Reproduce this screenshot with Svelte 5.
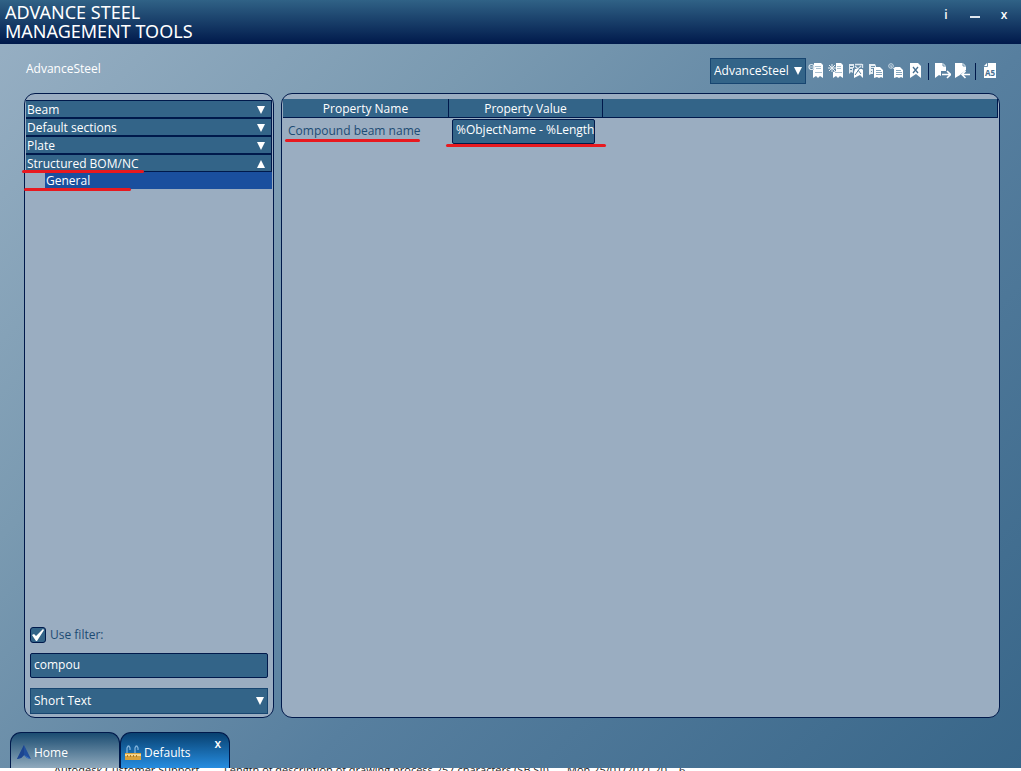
<script>
  let profile = $state('AdvanceSteel');
  let useFilter = $state(true);
  let filterText = $state('compou');
  let filterType = $state('Short Text');
  let compoundName = $state('%ObjectName - %Length');

  const profiles = ['AdvanceSteel'];
  const filterTypes = ['Short Text'];

  let groups = $state([
    { name: 'Beam', open: false, items: [] },
    { name: 'Default sections', open: false, items: [] },
    { name: 'Plate', open: false, items: [] },
    { name: 'Structured BOM/NC', open: true, items: ['General'] }
  ]);
</script>

<div class="app">
  <header>
    <h1>ADVANCE STEEL<br />MANAGEMENT TOOLS</h1>
    <div class="window-buttons">
      <button aria-label="Info">i</button>
      <button aria-label="Minimize"><span class="dash"></span></button>
      <button aria-label="Close">x</button>
    </div>
  </header>

  <div class="toolbar">
    <h2>AdvanceSteel</h2>
    <div class="tools">
      <div class="combo profile">
        <select aria-label="Profile" bind:value={profile}>
          {#each profiles as p}<option>{p}</option>{/each}
        </select>
        <svg class="arrow" width="8" height="8" viewBox="0 0 8 8"><path d="M0 0h8L4 8z" fill="#fff" /></svg>
      </div>
      <button class="tool" aria-label="Search defaults">
        <svg viewBox="0 0 16 16">
          <path d="M6 0h7l2 2v13l-3-2-2 2-2-2-3 2V7l1-1z" fill="#fff" />
          <path d="M7 3.500h6M8 5.500h5M7 9.500h7" stroke="#a9c0d0" />
          <circle cx="3.500" cy="4" r="2.500" fill="#557f9d" stroke="#dce6ee" stroke-width="1.200" />
          <path d="M2 4h4" stroke="#dce6ee" />
        </svg>
      </button>
      <button class="tool" aria-label="New default">
        <svg viewBox="0 0 16 16">
          <path d="M8 0h5l2 2v13l-3-2-2 2-2-2-3 2V9l3-1z" fill="#fff" />
          <path d="M9 3.500h4M9 5.500h4M7 9.500h7" stroke="#a9c0d0" />
          <path d="M0 5h8M4 1v8M1 2l6 6M7 2L1 8" stroke="#e7eef3" />
        </svg>
      </button>
      <button class="tool" aria-label="Rename default">
        <svg viewBox="0 0 16 16">
          <path d="M1 1h5v4H5v5l-2-1-2 2z" fill="#dce6ee" />
          <path d="M2 3.500h3M2 6.500h2" stroke="#557f9d" />
          <path d="M7 1.500h7M14.500 1v4M7 3l3 3 3-3" fill="none" stroke="#dce6ee" stroke-width="1.300" />
          <path d="M7 6h7l1 1v8l-3-3-2 1-4 2V9z" fill="#fff" />
          <path d="M12 5L7 12M10 7l3 4" fill="none" stroke="#557f9d" />
        </svg>
      </button>
      <button class="tool" aria-label="Copy default">
        <svg viewBox="0 0 16 16">
          <path d="M1 1h6l1 2v2H5v6H3l-2 1z" fill="#e7eef3" />
          <path d="M3 3.500h4M3 5.500h2M3 8.500h1" stroke="#6b91ad" />
          <path d="M7 4h5l3 3v8l-2-1-2 1-2-1-3 1V5z" fill="#fff" />
          <path d="M8 7.500h5M8 9.500h6M8 11.500h6" stroke="#86a6bd" />
        </svg>
      </button>
      <button class="tool" aria-label="Default history">
        <svg viewBox="0 0 16 16">
          <circle cx="3" cy="3" r="2.300" fill="none" stroke="#c8d8e3" />
          <path d="M3 2v2h1M5 5l2 2" fill="none" stroke="#c8d8e3" />
          <path d="M7 4h5l3 3v8l-2-1-2 1-2-1-3 1V5z" fill="#fff" />
          <path d="M8 7.500h5M8 9.500h6M8 11.500h6" stroke="#86a6bd" />
        </svg>
      </button>
      <button class="tool" aria-label="Delete default">
        <svg viewBox="0 0 16 16">
          <path d="M2 0h8l3 3v12l-5-4-6 4z" fill="#fff" />
          <path d="M5 4l5 6M10 4l-5 6" stroke="#466f91" stroke-width="1.300" />
        </svg>
      </button>
      <span class="divider"></span>
      <button class="tool" aria-label="Export">
        <svg viewBox="0 0 16 16">
          <path d="M0 0h8l3 3v5H6v5l-2-1-4 3z" fill="#fff" />
          <path d="M8 0v3h3" fill="none" stroke="#6b91ad" />
          <path d="M7 11.500h8M12 8l3.500 3.500L12 15" fill="none" stroke="#fff" stroke-width="1.600" />
        </svg>
      </button>
      <button class="tool" aria-label="Import">
        <svg viewBox="0 0 16 16">
          <path d="M0 0h8l3 3v4l-5 4-1 1-5 3z" fill="#fff" />
          <path d="M8 0v3h3" fill="none" stroke="#6b91ad" />
          <path d="M7 11.500h8M10.500 8L7 11.500l3.500 3.500" fill="none" stroke="#fff" stroke-width="1.600" />
        </svg>
      </button>
      <span class="divider"></span>
      <button class="tool last" aria-label="Advance Steel version">
        <svg viewBox="0 0 16 16">
          <path d="M5 0h9v15H2V3z" fill="#fff" />
          <path d="M2 3.500h3.500V0" fill="none" stroke="#6b91ad" />
          <text x="8" y="13" text-anchor="middle" font-size="8" font-weight="bold" fill="#466f91">A5</text>
        </svg>
      </button>
    </div>
  </div>

  <main>
    <aside class="panel">
      <nav>
        {#each groups as g}
          <button class="group" class:marked={g.open} onclick={() => (g.open = !g.open)}>
            <span>{g.name}</span>
            <svg width="8" height="8" viewBox="0 0 8 8"><path d={g.open ? 'M4 0l4 8H0z' : 'M0 0h8L4 8z'} fill="#fff" /></svg>
          </button>
          {#if g.open}
            {#each g.items as item}
              <a class="item" href="#general">{item}</a>
            {/each}
          {/if}
        {/each}
      </nav>
      <div class="filter">
        <label class="check">
          <input type="checkbox" bind:checked={useFilter} />
          <span class="box">
            {#if useFilter}
              <svg width="12" height="12" viewBox="0 0 12 12"><path d="M0 6l2-1 2 2 7-7 1 1-7 11H4z" fill="#fff" /></svg>
            {/if}
          </span>
          Use filter:
        </label>
        <input class="field" type="text" aria-label="Filter text" bind:value={filterText} />
        <div class="combo">
          <select aria-label="Filter type" bind:value={filterType}>
            {#each filterTypes as t}<option>{t}</option>{/each}
          </select>
          <svg class="arrow" width="8" height="8" viewBox="0 0 8 8"><path d="M0 0h8L4 8z" fill="#fff" /></svg>
        </div>
      </div>
    </aside>

    <section class="panel properties">
      <table>
        <thead>
          <tr>
            <th class="name">Property Name</th>
            <th class="value">Property Value</th>
            <th></th>
          </tr>
        </thead>
        <tbody>
          <tr>
            <td class="prop"><label for="compound">Compound beam name</label></td>
            <td class="val"><input id="compound" class="field" type="text" bind:value={compoundName} /></td>
            <td></td>
          </tr>
        </tbody>
      </table>
    </section>
  </main>

  <footer>
    <button class="tab">
      <svg width="14" height="16" viewBox="0 0 14 16">
        <path d="M7 0l7 14-4-1-3-3-3 3-4 1z" fill="#214f9c" />
        <path d="M7 0v10l-3 3-4 1z" fill="#1c4590" />
        <path d="M7 10l7 4-4-1z" fill="#3b75c4" />
      </svg>
      Home
    </button>
    <div class="tab active">
      <button class="tab-label">
        <svg width="16" height="16" viewBox="0 0 16 16">
          <path d="M2 8V3q1.500-4 3 0v2M10 8V3q1.500-4 3 0v2" fill="none" stroke="#7fb0d8" stroke-width="1.300" />
          <path d="M0 8h16v7H0z" fill="#d9a23c" />
          <path d="M0 9h16v2H0z" fill="#f5d58d" />
          <path d="M2.500 10v2M5.500 10v2M8.500 10v2M11.500 10v2" stroke="#a8782a" />
        </svg>
        Defaults
      </button>
      <button class="close" aria-label="Close Defaults">x</button>
    </div>
  </footer>
</div>
<div class="below">
  <span>Autodesk Customer Support</span>
  <span>Length of description of drawing process 257 characters (SB SII)</span>
  <span>Mon 25/01/2021 20...</span>
  <span>6</span>
</div>

<style>
  :global(body) {
    background: #fff;
    font-family: 'Open Sans', 'Noto Sans', sans-serif;
    font-size: 12px;
    line-height: 16px;
  }
  :global(#app) {
    display: flex;
    flex-direction: column;
    height: 100vh;
  }
  * { box-sizing: border-box; }
  h1, h2 { margin: 0; font-weight: 400; color: #fff; }
  button, input, select { font: inherit; color: #fff; }
  button { background: none; border: 0; padding: 0; cursor: pointer; }

  .app {
    flex: 1;
    min-height: 0;
    display: flex;
    flex-direction: column;
    background: linear-gradient(135deg, #98b0c4 0%, #7a9ab1 30%, #577f9f 60%, #386689 100%);
  }
  header {
    display: flex;
    justify-content: space-between;
    height: 44px;
    padding: 3px 12px 0 5px;
    background: linear-gradient(#306286, #00194b);
  }
  h1 {
    font-family: 'Noto Sans', 'Open Sans', sans-serif;
    font-size: 18px;
    line-height: 19px;
  }
  .window-buttons { display: flex; gap: 19px; height: 24px; }
  .window-buttons button { width: 10px; font-weight: 600; }
  .dash { display: block; height: 2px; margin-top: 4px; background: #dfe6ee; }

  .toolbar {
    display: flex;
    justify-content: space-between;
    padding: 14px 23px 9px 26px;
  }
  h2 { font-size: 12px; line-height: 22px; }
  .tools { display: flex; align-items: center; }
  .combo { position: relative; }
  .combo select {
    appearance: none;
    display: block;
    width: 100%;
    height: 26px;
    padding: 0 12px 1px 3px;
    border: 1px solid #174570;
    border-radius: 0;
    background: #336488;
  }
  .profile { width: 96px; margin-right: 2px; }
  .arrow { position: absolute; right: 4px; top: 9px; pointer-events: none; }
  .tool { width: 20px; height: 16px; }
  .tool svg { display: block; width: 16px; height: 16px; }
  .tool.last { width: 16px; }
  .divider { width: 1px; height: 17px; margin: 0 6px 0 0; background: #00194b; }

  main {
    flex: 1;
    min-height: 0;
    display: grid;
    grid-template-columns: 250px 1fr;
    gap: 7px;
    padding: 0 21px 0 24px;
  }
  .panel {
    border: 1px solid #00194b;
    border-radius: 11px;
    background: #9aadc1;
    padding: 6px 1px 3px;
  }
  aside {
    display: flex;
    flex-direction: column;
    justify-content: space-between;
  }
  .group {
    position: relative;
    display: flex;
    align-items: center;
    justify-content: space-between;
    width: 100%;
    height: 18px;
    padding: 2px 6px 0 1px;
    border: 1px solid #00194b;
    border-left-width: 0;
    background: #336488;
  }
  .item {
    position: relative;
    display: block;
    margin-left: 19px;
    padding-left: 1px;
    line-height: 17px;
    background: #1a4f9e;
    color: #fff;
    text-decoration: none;
  }
  /* red pen marks */
  .marked::after, .item::after, .prop::after, .val::after {
    content: '';
    position: absolute;
    height: 3px;
    border-radius: 2px;
    background: #e8191f;
  }
  .marked::after { left: -4px; bottom: -2px; width: 122px; z-index: 1; }
  .item::after { left: -21px; bottom: -2px; width: 107px; }
  .prop::after { left: 2px; right: 29px; bottom: 2px; }
  .val::after { left: -3px; right: -3px; bottom: -3px; }

  .filter { display: flex; flex-direction: column; gap: 10px; padding: 0 4px; }
  .check { display: flex; align-items: center; gap: 4px; color: #1d4b73; }
  .check input { position: absolute; opacity: 0; }
  .box {
    display: grid;
    place-items: center;
    width: 16px;
    height: 16px;
    border: 1px solid #00194b;
    border-radius: 3px;
    background: #336488;
  }
  .field {
    display: block;
    width: 100%;
    height: 25px;
    padding: 0 0 3px 3px;
    border: 1px solid #00194b;
    border-radius: 2px;
    background: #336488;
  }

  table { width: 100%; border-collapse: separate; border-spacing: 0; table-layout: fixed; }
  .properties { padding: 5px 1px; }
  th {
    height: 19px;
    padding: 2px 0 0;
    border-right: 1px solid #00194b;
    border-bottom: 1px solid #00194b;
    background: #336488;
    color: #fff;
    font-weight: 400;
  }
  .name { width: 166px; }
  .value { width: 154px; }
  td { position: relative; height: 26px; padding: 0; }
  .prop { padding-left: 5px; color: #1d4b73; white-space: nowrap; }
  .val { padding: 0 8px 0 3px; }

  footer { display: flex; padding: 14px 10px 0; }
  .tab {
    display: flex;
    align-items: center;
    width: 110px;
    height: 36px;
    padding: 4px 6px 0;
    border: 1px solid #00194b;
    border-bottom: 0;
    border-radius: 11px 11px 0 0;
    background: linear-gradient(#1b4c71, #90aabd);
    gap: 3px;
  }
  .active {
    justify-content: space-between;
    align-items: flex-start;
    padding: 3px 8px 0 4px;
    background: linear-gradient(#08406f, #268de0);
  }
  .tab-label { display: flex; align-items: center; gap: 3px; height: 33px; }
  .close { font-weight: 600; }

  .below {
    display: grid;
    grid-template-columns: 170px 343px 112px 1fr;
    height: 3px;
    padding-left: 54px;
    overflow: hidden;
    background: #fff;
    color: #222;
    font-size: 11px;
    line-height: 3px;
    white-space: nowrap;
  }
</style>
